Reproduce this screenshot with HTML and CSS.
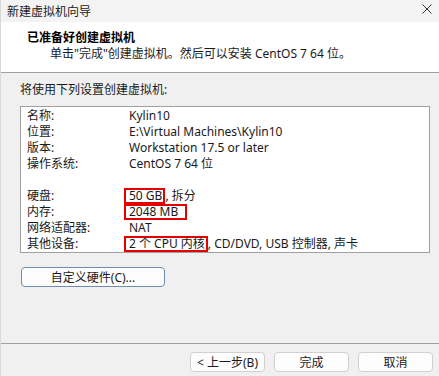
FILE: index.html
```html
<!DOCTYPE html>
<html lang="zh-CN">
<head>
    <meta charset="UTF-8">
    <title>新建虚拟机向导</title>
    <link rel="stylesheet" href="styles.css">
</head>
<body>
    <div class="wizard">
        <div class="titlebar">
            <span class="title">新建虚拟机向导</span>
            <svg class="close" width="10" height="10" viewBox="0 0 10 10">
                <path d="M0.5 0.5 L9.5 9.5 M9.5 0.5 L0.5 9.5" stroke="#333" stroke-width="1" fill="none"/>
            </svg>
        </div>

        <div class="header">
            <div class="header-title">已准备好创建虚拟机</div>
            <div class="header-sub">单击"完成"创建虚拟机。然后可以安装 CentOS 7 64 位。</div>
        </div>

        <div class="content">
            <div class="intro">将使用下列设置创建虚拟机:</div>
            <div class="summary">
                <div class="row"><span class="key">名称:</span><span>Kylin10</span></div>
                <div class="row"><span class="key">位置:</span><span>E:\Virtual Machines\Kylin10</span></div>
                <div class="row"><span class="key">版本:</span><span>Workstation 17.5 or later</span></div>
                <div class="row"><span class="key">操作系统:</span><span>CentOS 7 64 位</span></div>
                <div class="row"></div>
                <div class="row"><span class="key">硬盘:</span><span><span class="mark">50 GB</span>, 拆分</span></div>
                <div class="row"><span class="key">内存:</span><span><span class="mark mark-wide">2048 MB</span></span></div>
                <div class="row"><span class="key">网络适配器:</span><span>NAT</span></div>
                <div class="row"><span class="key">其他设备:</span><span><span class="mark">2 个 CPU 内核</span>, CD/DVD, USB 控制器, 声卡</span></div>
            </div>
            <button class="btn btn-custom">自定义硬件(C)...</button>
        </div>

        <div class="footer">
            <button class="btn btn-nav">&lt; 上一步(B)</button>
            <button class="btn btn-nav">完成</button>
            <button class="btn btn-nav">取消</button>
        </div>
    </div>
</body>
</html>
```

FILE: styles.css
```css
* {
    box-sizing: border-box;
}

body {
    margin: 0;
    font-family: "Noto Sans", "Noto Sans CJK SC", sans-serif;
    font-size: 12px;
    color: #1a1a1a;
    background: #f0f0f0;
    overflow: hidden;
}

.wizard {
    width: 439px;
    height: 376px;
    display: flex;
    flex-direction: column;
    background: #f0f0f0;
    border-left: 1px solid #d8d8d8;
}

.titlebar {
    height: 22px;
    display: flex;
    align-items: center;
    justify-content: space-between;
    padding: 0 7px 1px 6px;
    background: #f3f3f3;
}

.title {
    font-size: 12px;
    color: #222;
}

.close {
    margin-top: -3px;
}

.header {
    height: 51px;
    background: #fff;
    border-bottom: 1px solid #a0a0a0;
    padding: 8px 0 0 26px;
    line-height: 16px;
}

.header-title {
    font-weight: bold;
    color: #000;
}

.header-sub {
    padding-left: 23px;
}

.content {
    padding: 9px 10px 0 19px;
    display: flex;
    flex-direction: column;
    align-items: flex-start;
}

.intro {
    line-height: 16px;
    margin-bottom: 8px;
}

.summary {
    width: 410px;
    height: 147px;
    background: #fff;
    border: 1px solid #a0a0a0;
    padding: 1px 0 0 6px;
}

.row {
    height: 16px;
    line-height: 16px;
    display: flex;
    align-items: center;
    white-space: nowrap;
}

.key {
    width: 102px;
    flex: none;
}

.mark {
    display: inline-block;
    border: 2px solid #e60000;
    margin-left: -5px;
    padding: 0 1px 0 3px;
    line-height: 12px;
    vertical-align: middle;
}

.mark-wide {
    padding-right: 7px;
}

.btn {
    font-family: inherit;
    font-size: 12px;
    color: #1a1a1a;
    background: #fdfdfd;
    border: 1px solid #d0d0d0;
    border-radius: 4px;
    height: 20px;
    padding: 0;
}

.btn-custom {
    margin-top: 14px;
    margin-left: 1px;
    width: 144px;
    border-color: #6e8db5;
}

.footer {
    margin-top: auto;
    border-top: 1px solid #a0a0a0;
    display: flex;
    justify-content: flex-end;
    gap: 9px;
    padding: 8px 6px 0 0;
    height: 33px;
}

.btn-nav {
    width: 75px;
    height: 20px;
}
```
